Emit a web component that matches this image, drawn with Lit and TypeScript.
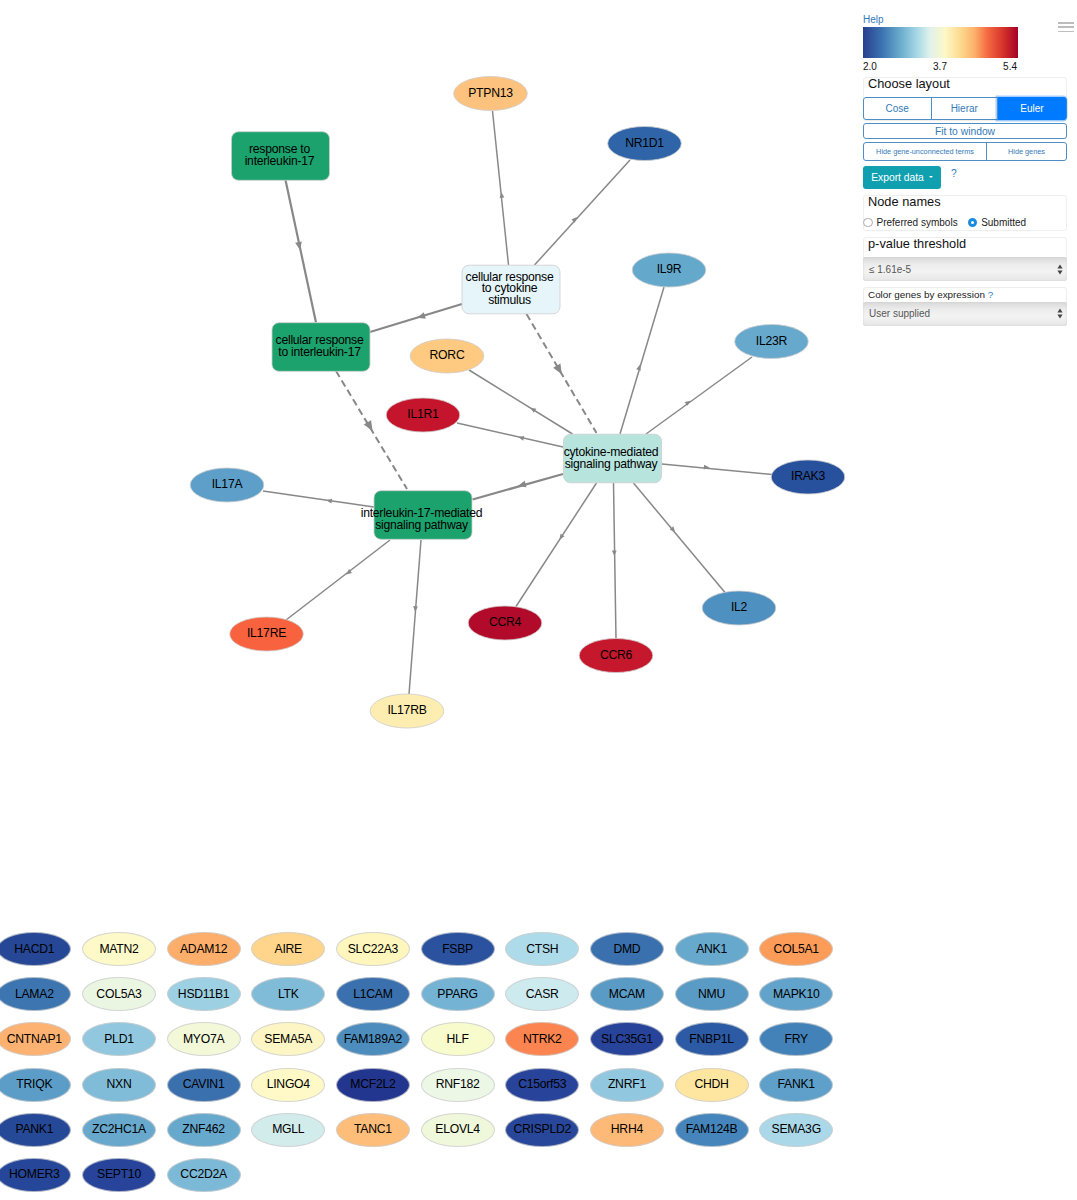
import { LitElement, html, css, svg } from "lit";
import { customElement } from "lit/decorators.js";

type G = { n: string; x: number; y: number; c: string };
type T = { l: string[]; x: number; y: number; c: string; dy?: number; dx?: number };
type E = { a: number[]; b: number[]; m: number[]; k?: "t" | "d" };

const genes: G[] = [
  { n: "PTPN13", x: 490.5, y: 93.5, c: "#fdc27d" },
  { n: "NR1D1", x: 644.5, y: 143.5, c: "#2f65a8" },
  { n: "IL9R", x: 669, y: 270, c: "#64a8cc" },
  { n: "IL23R", x: 771.5, y: 341.5, c: "#67a9cd" },
  { n: "RORC", x: 447, y: 356, c: "#fec980" },
  { n: "IL1R1", x: 423, y: 415, c: "#c5152d" },
  { n: "IL17A", x: 227, y: 485, c: "#5d9fc9" },
  { n: "IRAK3", x: 808, y: 477, c: "#27509d" },
  { n: "IL2", x: 739, y: 608, c: "#4e90bf" },
  { n: "CCR4", x: 505, y: 623, c: "#b20a2a" },
  { n: "CCR6", x: 616, y: 655.5, c: "#c6182d" },
  { n: "IL17RE", x: 266.5, y: 634, c: "#f8623e" },
  { n: "IL17RB", x: 407, y: 711, c: "#fdedb0" },
];

const terms: T[] = [
  { l: ["response to", "interleukin-17"], x: 280.5, y: 156, c: "#1ca26d", dx: -1, dy: -0.7 },
  { l: ["cellular response", "to interleukin-17"], x: 321, y: 347, c: "#1ca26d", dx: -1.5, dy: -0.3 },
  { l: ["cellular response", "to cytokine", "stimulus"], x: 511, y: 289.5, c: "#e6f5f9", dx: -1.5, dy: -0.5 },
  { l: ["cytokine-mediated", "signaling pathway"], x: 612.5, y: 458.5, c: "#b7e5de", dx: -1.5, dy: 0 },
  { l: ["interleukin-17-mediated", "signaling pathway"], x: 423, y: 515, c: "#1ca26d", dx: -1.5, dy: 5 },
];

const edges: E[] = [
  { a: [508.5, 265], b: [492.5, 111], m: [501.7, 195] },
  { a: [534.5, 265], b: [630, 160], m: [575, 219] },
  { a: [462, 304], b: [370, 332], m: [421, 316.7], k: "t" },
  { a: [285.5, 180], b: [316, 322.5], m: [299.3, 246], k: "t" },
  { a: [526.5, 314], b: [596.5, 433], m: [559.3, 370], k: "d" },
  { a: [336, 371], b: [407, 489], m: [370, 426.7], k: "d" },
  { a: [572.5, 434], b: [469, 370], m: [532.7, 409.3] },
  { a: [563, 447], b: [457, 423], m: [521, 437.7] },
  { a: [620, 434], b: [664, 287], m: [639.3, 367.3] },
  { a: [646, 434], b: [752, 357], m: [688.3, 402.3] },
  { a: [662, 464], b: [772, 474.5], m: [706.7, 467.3] },
  { a: [633.5, 483], b: [725, 592.5], m: [673.3, 530] },
  { a: [613.5, 483], b: [616, 638.5], m: [614.3, 553.3] },
  { a: [596.5, 483], b: [516, 606.5], m: [561, 537.3] },
  { a: [563, 474], b: [472.5, 499.5], m: [521.7, 485], k: "t" },
  { a: [374, 507], b: [263, 491], m: [329, 500.7] },
  { a: [390, 540], b: [286, 620], m: [348.3, 572.7] },
  { a: [421, 540], b: [409, 694], m: [415.3, 609] },
];

const unconnected: [string, string][] = [
  ["HACD1", "#254795"], ["MATN2", "#fdf9c8"], ["ADAM12", "#fdae6b"], ["AIRE", "#fed58b"], ["SLC22A3", "#fff6bd"],
  ["FSBP", "#2a529f"], ["CTSH", "#aedbe9"], ["DMD", "#3a70ae"], ["ANK1", "#67a9cd"], ["COL5A1", "#fd9b58"],
  ["LAMA2", "#3d75b1"], ["COL5A3", "#ebf6e2"], ["HSD11B1", "#9dd0e3"], ["LTK", "#80bcd8"], ["L1CAM", "#3a70ad"],
  ["PPARG", "#74b3d4"], ["CASR", "#cdeaee"], ["MCAM", "#5a9bc6"], ["NMU", "#5a9bc6"], ["MAPK10", "#62a3cb"],
  ["CNTNAP1", "#fdb271"], ["PLD1", "#92c8df"], ["MYO7A", "#f2f8d8"], ["SEMA5A", "#fdf6c4"], ["FAM189A2", "#4d8dbe"],
  ["HLF", "#f8fbcb"], ["NTRK2", "#fc8450"], ["SLC35G1", "#27439a"], ["FNBP1L", "#2c5aa5"], ["FRY", "#4382b9"],
  ["TRIQK", "#5c9dc8"], ["NXN", "#80bcd8"], ["CAVIN1", "#3a70ae"], ["LINGO4", "#fff9c8"], ["MCF2L2", "#23368f"],
  ["RNF182", "#ecf7e5"], ["C15orf53", "#27439a"], ["ZNRF1", "#92c8df"], ["CHDH", "#fee6a0"], ["FANK1", "#5ea0c9"],
  ["PANK1", "#264997"], ["ZC2HC1A", "#68a8cc"], ["ZNF462", "#67a9cd"], ["MGLL", "#d2ecec"], ["TANC1", "#febd78"],
  ["ELOVL4", "#eff8da"], ["CRISPLD2", "#28479a"], ["HRH4", "#fdb977"], ["FAM124B", "#4585bb"], ["SEMA3G", "#aad8e8"],
  ["HOMER3", "#26469a"], ["SEPT10", "#27439a"], ["CC2D2A", "#7cb9d6"],
];

const updown = html`<svg class="updown" viewBox="0 0 6 11" width="6" height="11"><path d="M3 0.5 5.6 4.4H.4zM3 10.5.4 6.6h5.2z"></path></svg>`;

@customElement("app-root")
export class AppRoot extends LitElement {
  static styles = css`
    :host { display: block; width: 1077px; height: 1200px; overflow: hidden; background: #fff;
      font-family: "Liberation Sans", Arial, sans-serif; color: #111; }
    .page { display: flex; align-items: flex-start; }
    .left { width: 863px; flex: none; }
    .canvas { display: block; width: 863px; height: 932px; }
    .edge { stroke: #888; stroke-width: 1.5; fill: none; }
    .edge.t { stroke-width: 2.2; }
    .edge.d { stroke-width: 2; stroke-dasharray: 7 4; }
    .head { fill: #888; }
    .node { stroke: rgba(205,205,205,0.8); stroke-width: 1; }
    .lbl { font-family: "Liberation Sans", Arial, sans-serif; font-size: 12.2px; letter-spacing: -0.25px; fill: #000; text-anchor: middle; }
    .genes { display: grid; grid-template-columns: repeat(10, 74px); column-gap: 10.67px; row-gap: 11.2px; margin-left: -2.7px; }
    .gene { height: 34px; box-sizing: border-box; border: 1px solid rgba(205,205,205,0.8); border-radius: 50%;
      display: flex; align-items: center; justify-content: center; padding-bottom: 1px;
      font-size: 12.2px; letter-spacing: -0.25px; color: #000; white-space: nowrap; }
    .panel { width: 204px; flex: none; padding-top: 13px; display: flex; flex-direction: column; }
    .top { display: flex; width: 211px; }
    .legend { width: 155px; flex: none; }
    .help { font-size: 10px; line-height: 14px; color: #337ab7; }
    .bar { height: 31px; background: linear-gradient(90deg, #2a3f8f 0%, #3a72b0 12%, #6fb0cf 25%, #a8d8e6 35%, #dff1ec 43%, #fdf8c6 53%, #fdd98e 63%, #fdb06a 72%, #f56c43 80%, #d7352b 90%, #a50026 100%); }
    .scale { display: flex; justify-content: space-between; font-size: 10px; line-height: 13px; color: #111; margin-top: 2px; padding-right: 1px; }
    .menu { width: 16px; margin: 9px 0 0 40px; height: 10px; display: flex; flex-direction: column; justify-content: space-between; }
    .menu i { display: block; height: 1.5px; background: #bdbdbd; }
    .card { border: 1px solid #eee; border-radius: 3px; box-sizing: border-box; }
    .title { font-size: 12.8px; line-height: 12px; padding: 0 0 0 4px; color: #111; }
    .c1 { margin-top: 3.5px; height: 44px; }
    .btns { display: flex; border: 1px solid #4d8fc4; border-radius: 3px; box-sizing: border-box; color: #337ab7; font-size: 10px; }
    .btns > div { display: flex; align-items: center; justify-content: center; box-sizing: border-box; white-space: nowrap; }
    .btns > div + div { border-left: 1px solid #4d8fc4; }
    .layout { height: 23.5px; margin: 7px -1px 0; }
    .layout .b { width: 66.5px; flex: none; }
    .layout .on { background: #007bff; color: #fff; border-radius: 0 3px 3px 0; box-shadow: 0 0 0 1.5px rgba(0,123,255,.35); margin: -1px 0 -1px 0; flex: 1 1 0; width: auto; }
    .fit { height: 15.5px; margin-top: 2.5px; font-size: 10.3px; justify-content: center; align-items: center; padding-top: 1px; }
    .hide { height: 18.5px; margin-top: 3.5px; font-size: 7.3px; }
    .hide .w1 { width: 122px; }
    .hide .w2 { flex: 1; }
    .exp { display: flex; align-items: flex-start; margin-top: 5px; }
    .export { width: 78px; height: 23.5px; border-radius: 3px; background: #10a0b0; color: #fff; font-size: 10.3px;
      display: flex; align-items: center; justify-content: center; gap: 5px; }
    .caret { width: 0; height: 0; border-left: 2.5px solid transparent; border-right: 2.5px solid transparent; border-top: 2.5px solid #fff; }
    .q { color: #337ab7; font-size: 10.3px; margin-left: 10px; margin-top: 1px; line-height: 13px; }
    .c2 { margin-top: 5.5px; height: 36.5px; }
    .radios { display: flex; align-items: center; font-size: 10px; color: #222; margin: 9.5px 0 0 -1px; }
    .radio { width: 9.5px; height: 9.5px; border-radius: 50%; box-sizing: border-box; border: 1px solid #aaa; background: #fff; margin-right: 4px; flex: none; }
    .radio.sel { border: 3px solid #1a8ce0; margin-left: 10px; }
    .c3 { margin-top: 5.5px; height: 44.5px; }
    .c4 { margin-top: 5.5px; height: 39.5px; }
    .select { display: flex; align-items: center; justify-content: space-between; margin: 0 -1px; padding: 0 4px 0 6px;
      background: linear-gradient(180deg, #d8d8d8 0%, #ececec 30%, #f3f3f3 60%, #e6e6e6 100%); border-radius: 3px;
      box-shadow: inset 0 0 2px #ccc; font-size: 10px; color: #555; }
    .c3 .select { height: 24px; margin-top: 7.5px; }
    .c4 .select { height: 23.5px; margin-top: 1px; }
    .updown { fill: #444; }
    .small { font-size: 9.9px; line-height: 13.5px; padding-left: 4px; color: #222; }
    .small span { color: #2a80c8; }
  `;

  private arrow(e: E) {
    const ang = (Math.atan2(e.b[1] - e.a[1], e.b[0] - e.a[0]) * 180) / Math.PI;
    const s = e.k === "d" ? 5 : e.k === "t" ? 4 : 2.8;
    return svg`<polygon class="head" points="${s},0 ${-s},${-s * 0.85} ${-s},${s * 0.85}" transform="translate(${e.m[0]} ${e.m[1]}) rotate(${ang})"></polygon>`;
  }

  render() {
    return html`<div class="page">
      <div class="left">
        <svg class="canvas" viewBox="0 0 863 932">
          ${edges.map((e) => svg`<line class="edge ${e.k ?? ""}" x1=${e.a[0]} y1=${e.a[1]} x2=${e.b[0]} y2=${e.b[1]}></line>${this.arrow(e)}`)}
          ${genes.map((g) => svg`<ellipse class="node" cx=${g.x} cy=${g.y} rx="36.8" ry="17" fill=${g.c}></ellipse>
            <text class="lbl" x=${g.x} y=${g.y + 3.4}>${g.n}</text>`)}
          ${terms.map((t) => svg`<rect class="node" x=${t.x - 49} y=${t.y - 24.3} width="98" height="48.6" rx="7" fill=${t.c}></rect>
            ${t.l.map((s, i) => svg`<text class="lbl" x=${t.x + (t.dx ?? 0)} y=${t.y + (t.dy ?? 0) - (t.l.length * 11.8) / 2 + 11.8 * i + 9.2}>${s}</text>`)}`)}
        </svg>
        <div class="genes">
          ${unconnected.map(([n, c]) => html`<div class="gene" style="background:${c}">${n}</div>`)}
        </div>
      </div>
      <div class="panel">
        <div class="top">
          <div class="legend">
            <div class="help">Help</div>
            <div class="bar"></div>
            <div class="scale"><span>2.0</span><span>3.7</span><span>5.4</span></div>
          </div>
          <div class="menu"><i></i><i></i><i></i></div>
        </div>
        <div class="card c1">
          <div class="title">Choose layout</div>
          <div class="btns layout">
            <div class="b">Cose</div><div class="b">Hierar</div><div class="b on">Euler</div>
          </div>
        </div>
        <div class="btns fit">Fit to window</div>
        <div class="btns hide"><div class="w1">Hide gene-unconnected terms</div><div class="w2">Hide genes</div></div>
        <div class="exp">
          <div class="export">Export data <span class="caret"></span></div>
          <div class="q">?</div>
        </div>
        <div class="card c2">
          <div class="title">Node names</div>
          <div class="radios">
            <span class="radio"></span><span>Preferred symbols</span>
            <span class="radio sel"></span><span>Submitted</span>
          </div>
        </div>
        <div class="card c3">
          <div class="title">p-value threshold</div>
          <div class="select"><span>≤ 1.61e-5</span>${updown}</div>
        </div>
        <div class="card c4">
          <div class="small">Color genes by expression <span>?</span></div>
          <div class="select"><span>User supplied</span>${updown}</div>
        </div>
      </div>
    </div>`;
  }
}
